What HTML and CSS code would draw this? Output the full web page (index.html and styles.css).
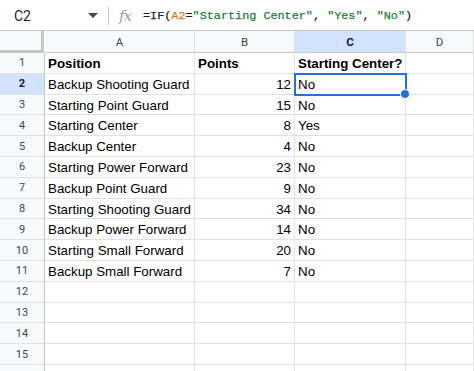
FILE: index.html
```html
<!DOCTYPE html>
<html>
<head>
<meta charset="utf-8">
<link rel="stylesheet" href="styles.css">
</head>
<body>
<div class="bar">
  <div class="namebox">C2</div>
  <div class="caret"><svg width="10" height="6" viewBox="0 0 10 6"><path d="M0 0 L10 0 L5 5 Z" fill="#444746"/></svg></div>
  <div class="sep"></div>
  <div class="fx">fx</div>
  <div class="formula">=IF(<span class="ref">A2</span>=<span class="str">"Starting Center"</span>, <span class="str">"Yes"</span>, <span class="str">"No"</span>)</div>
</div>
<div class="grid">
  <div class="corner"></div>
  <div class="ch">A</div>
  <div class="ch">B</div>
  <div class="ch sel">C</div>
  <div class="ch last">D</div>

  <div class="rh">1</div><div class="c b">Position</div><div class="c b">Points</div><div class="c b">Starting Center?</div><div class="c last"></div>
  <div class="rh sel">2</div><div class="c">Backup Shooting Guard</div><div class="c n">12</div><div class="c active">No<span class="handle"></span></div><div class="c last"></div>
  <div class="rh">3</div><div class="c">Starting Point Guard</div><div class="c n">15</div><div class="c">No</div><div class="c last"></div>
  <div class="rh">4</div><div class="c">Starting Center</div><div class="c n">8</div><div class="c">Yes</div><div class="c last"></div>
  <div class="rh">5</div><div class="c">Backup Center</div><div class="c n">4</div><div class="c">No</div><div class="c last"></div>
  <div class="rh">6</div><div class="c">Starting Power Forward</div><div class="c n">23</div><div class="c">No</div><div class="c last"></div>
  <div class="rh">7</div><div class="c">Backup Point Guard</div><div class="c n">9</div><div class="c">No</div><div class="c last"></div>
  <div class="rh">8</div><div class="c">Starting Shooting Guard</div><div class="c n">34</div><div class="c">No</div><div class="c last"></div>
  <div class="rh">9</div><div class="c">Backup Power Forward</div><div class="c n">14</div><div class="c">No</div><div class="c last"></div>
  <div class="rh">10</div><div class="c">Starting Small Forward</div><div class="c n">20</div><div class="c">No</div><div class="c last"></div>
  <div class="rh">11</div><div class="c">Backup Small Forward</div><div class="c n">7</div><div class="c">No</div><div class="c last"></div>
  <div class="rh">12</div><div class="c"></div><div class="c"></div><div class="c"></div><div class="c last"></div>
  <div class="rh">13</div><div class="c"></div><div class="c"></div><div class="c"></div><div class="c last"></div>
  <div class="rh">14</div><div class="c"></div><div class="c"></div><div class="c"></div><div class="c last"></div>
  <div class="rh">15</div><div class="c"></div><div class="c"></div><div class="c"></div><div class="c last"></div>
  <div class="rh"></div><div class="c"></div><div class="c"></div><div class="c"></div><div class="c last"></div>
</div>
</body>
</html>
```
FILE: styles.css
```css
html, body {
  margin: 0;
  padding: 0;
  background: #fff;
  overflow: hidden;
}
body {
  width: 474px;
  height: 371px;
  font-family: "Liberation Sans", Arial, sans-serif;
  color: #202124;
}
.bar {
  height: 31px;
  box-sizing: border-box;
  border-bottom: 1px solid #c7c7c7;
  display: flex;
  align-items: center;
  padding-top: 1px;
}
.namebox {
  font-family: Roboto, "Liberation Sans", sans-serif;
  font-size: 14px;
  color: #1f1f1f;
  margin-left: 14px;
  width: 72px;
}
.caret {
  display: flex;
  align-items: center;
  width: 10px;
  margin-left: 2px;
}
.sep {
  width: 1px;
  height: 18px;
  background: #c7c7c7;
  margin-left: 10px;
}
.fx {
  font-family: "DejaVu Serif", "Liberation Serif", serif;
  font-style: italic;
  font-size: 15px;
  color: #9aa0a6;
  margin-left: 10px;
  width: 24px;
  letter-spacing: -1px;
}
.formula {
  font-family: "Liberation Mono", "DejaVu Sans Mono", monospace;
  font-size: 11.8px;
  color: #202124;
  white-space: nowrap;
  -webkit-text-stroke: 0.25px currentColor;
}
.ref { color: #e8710a; }
.str { color: #188038; }

.grid {
  display: grid;
  grid-template-columns: 45px 150px 100px 111px 68px;
  grid-template-rows: 22px repeat(16, 20.8px);
}
.corner {
  background: #f8f9fa;
  border-right: 3px solid #c4c7c5;
  border-bottom: 3px solid #c4c7c5;
  margin-right: -1px;
  box-sizing: border-box;
  width: 44px;
}
.ch {
  background: #f8f9fa;
  border-right: 1px solid #e1e1e1;
  border-bottom: 1px solid #c4c7c5;
  box-sizing: border-box;
  display: flex;
  align-items: center;
  justify-content: center;
  font-family: Roboto, "Liberation Sans", sans-serif;
  font-size: 11.5px;
  color: #444746;
}
.ch.sel, .rh.sel {
  background: #d3e3fd;
  color: #041e49;
  font-weight: bold;
}
.rh {
  background: #f8f9fa;
  border-right: 1px solid #c4c7c5;
  border-bottom: 1px solid #e1e1e1;
  box-sizing: border-box;
  display: flex;
  align-items: center;
  justify-content: center;
  font-family: Roboto, "Liberation Sans", sans-serif;
  font-size: 11px;
  color: #444746;
}
.c {
  position: relative;
  border-right: 1px solid #e1e1e1;
  border-bottom: 1px solid #e1e1e1;
  box-sizing: border-box;
  font-size: 13.33px;
  line-height: 20px;
  padding: 1px 3px 0 3px;
  white-space: nowrap;
  color: #000;
}
.c.b { font-weight: bold; }
.c.n { text-align: right; }
.c.active {
  outline: 2px solid #1a73e8;
  outline-offset: -1px;
  z-index: 1;
}
.handle {
  position: absolute;
  right: -5px;
  bottom: -5px;
  width: 8px;
  height: 8px;
  border-radius: 50%;
  background: #1a73e8;
  border: 1px solid #fff;
}
```
